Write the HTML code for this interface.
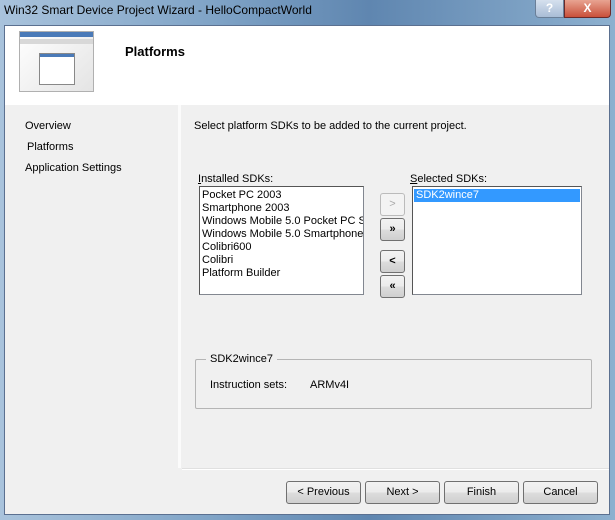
<!DOCTYPE html><html><head><style>
body{margin:0;width:615px;height:520px;overflow:hidden;font-family:"Liberation Sans",sans-serif;font-size:11px;color:#000;position:relative;background:linear-gradient(90deg,#a9c3dc 0%,#7fa3c6 35%,#5f86b0 60%,#8db0cf 100%)}
.a{position:absolute}
.btn{position:absolute;height:21px;border:1px solid #707070;border-radius:3px;background:linear-gradient(#f2f2f2,#ebebeb 50%,#dddddd 51%,#cfcfcf);text-align:center;line-height:21px;font-size:11px}
.lb{position:absolute;background:#fff;border:1px solid #828790;border-top-color:#555;border-left-color:#555;overflow:hidden}
</style></head><body>
<div class="a" style="left:4px;top:3px;font-size:12px;">Win32 Smart Device Project Wizard - HelloCompactWorld</div>
<div class="a" style="left:535px;top:0;width:27px;height:17px;border:1px solid #6a7f98;border-top:none;border-radius:0 0 0 4px;background:linear-gradient(#d5e0ee,#a9bdd6);color:#fff;text-align:center;font-weight:bold;font-size:12px;line-height:16px">?</div>
<div class="a" style="left:564px;top:0;width:45px;height:17px;border:1px solid #6a2a2a;border-top:none;border-radius:0 0 4px 0;background:linear-gradient(#e8a492,#c9503a);color:#fff;text-align:center;font-weight:bold;font-size:12px;line-height:16px">X</div>
<div class="a" style="left:4px;top:25px;width:604px;height:488px;background:#f0f0f0;border:1px solid #5b7090"></div>
<div class="a" style="left:5px;top:26px;width:604px;height:79px;background:#fff"></div>
<div class="a" style="left:19px;top:31px;width:73px;height:59px;border:1px solid #b0b0b0;background:linear-gradient(135deg,#fff,#e4e4e4)">
<div class="a" style="left:0;top:0;width:73px;height:5px;background:#4a7ab8"></div>
<div class="a" style="left:0;top:7px;width:73px;height:5px;background:#d8d8d8"></div>
<div class="a" style="left:19px;top:21px;width:34px;height:30px;border:1px solid #888;background:#fff"><div style="height:3px;background:#4a7ab8"></div></div>
</div>
<div class="a" style="left:125px;top:44px;font-size:13px;font-weight:bold">Platforms</div>
<div class="a" style="left:178px;top:105px;width:3px;height:363px;background:#fbfbfb"></div>
<div class="a" style="left:25px;top:120px">Overview</div>
<div class="a" style="left:27px;top:141px">Platforms</div>
<div class="a" style="left:25px;top:162px">Application Settings</div>
<div class="a" style="left:194px;top:120px">Select platform SDKs to be added to the current project.</div>
<div class="a" style="left:198px;top:173px"><u>I</u>nstalled SDKs:</div>
<div class="a" style="left:410px;top:173px"><u>S</u>elected SDKs:</div>
<div class="lb" style="left:199px;top:186px;width:163px;height:107px;line-height:13px;padding:0"><div style="padding:2px 2px;white-space:nowrap">Pocket PC 2003<br>Smartphone 2003<br>Windows Mobile 5.0 Pocket PC SD<br>Windows Mobile 5.0 Smartphone<br>Colibri600<br>Colibri<br>Platform Builder</div></div>
<div class="lb" style="left:412px;top:186px;width:168px;height:107px"><div style="margin:2px 1px;background:#3399ff;color:#fff;height:13px;line-height:13px;padding-left:2px">SDK2wince7</div></div>
<div class="btn" style="left:380px;top:193px;width:23px;color:#aaa;border-color:#bbb;background:#f3f3f3">&gt;</div>
<div class="btn" style="left:380px;top:218px;width:23px;font-weight:bold">»</div>
<div class="btn" style="left:380px;top:250px;width:23px;font-weight:bold">&lt;</div>
<div class="btn" style="left:380px;top:275px;width:23px;font-weight:bold">«</div>
<div class="a" style="left:195px;top:359px;width:395px;height:48px;border:1px solid #b5b5b5;border-radius:2px"></div>
<div class="a" style="left:206px;top:353px;padding:0 4px;background:#f0f0f0">SDK2wince7</div>
<div class="a" style="left:210px;top:379px">Instruction sets:</div>
<div class="a" style="left:310px;top:379px">ARMv4I</div>
<div class="a" style="left:182px;top:468px;width:427px;height:1px;background:#e0e0e0"></div>
<div class="a" style="left:182px;top:469px;width:427px;height:1px;background:#fff"></div>
<div class="btn" style="left:286px;top:481px;width:73px">&lt; Previous</div>
<div class="btn" style="left:365px;top:481px;width:73px">Next &gt;</div>
<div class="btn" style="left:444px;top:481px;width:73px">Finish</div>
<div class="btn" style="left:523px;top:481px;width:73px">Cancel</div>
</body></html>
